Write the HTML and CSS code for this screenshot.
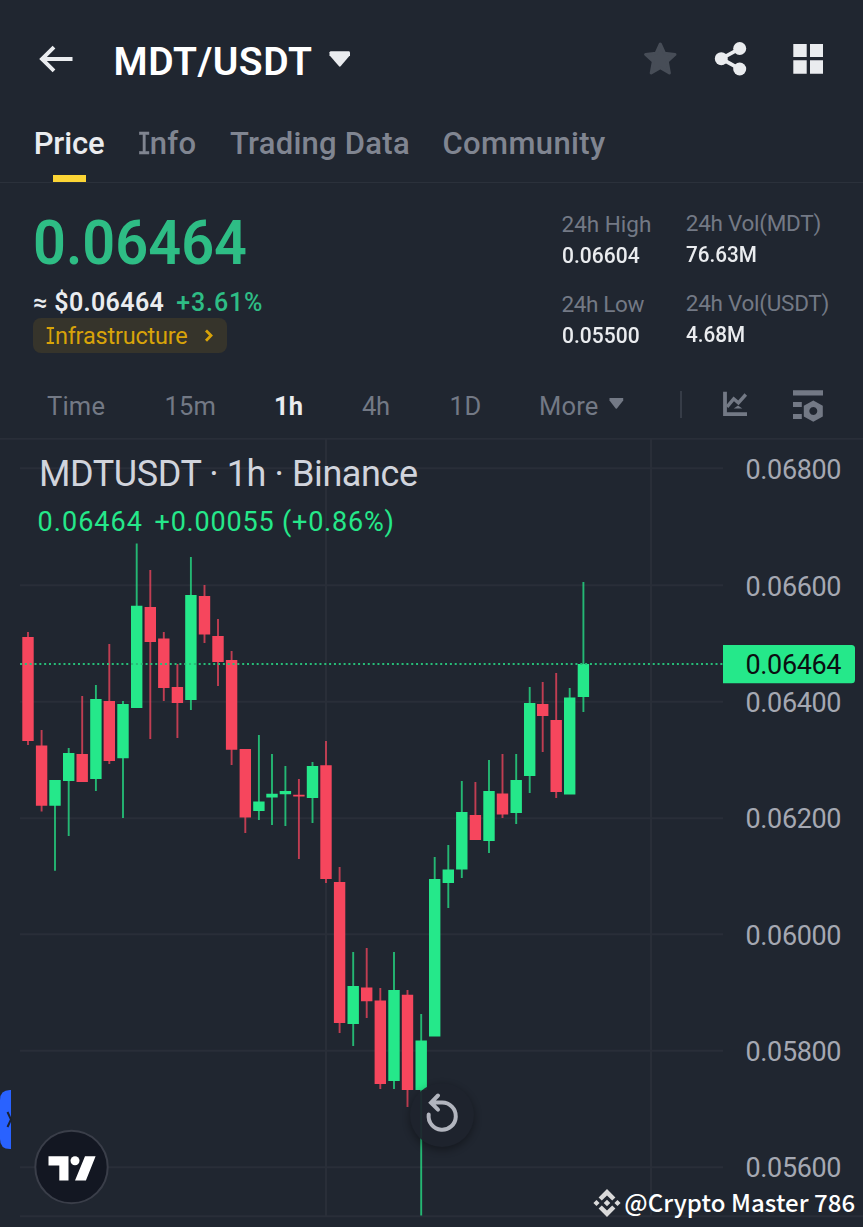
FILE: index.html
```html
<!DOCTYPE html>
<html lang="en">
<head>
<meta charset="utf-8">
<title>MDT/USDT</title>
<link rel="stylesheet" href="styles.css">
</head>
<body>
<main class="app">
  <header class="topbar">
    <svg class="back" width="36" height="30" viewBox="38 44 36 30"><path d="M54 47.2 42 59l12 11.8M42 59h30.5"/></svg>
    <h1 class="pair">MDT/USDT</h1>
    <svg class="caret" width="22" height="18" viewBox="329 50 22 18"><path d="M330.5 51.3h18.7l.8 1v3L340.6 66.3q-.8.7-1.6 0L329.500 55.300v-3z"/></svg>
    <div class="actions">
      <svg width="36" height="36" viewBox="642 41 36 36"><path class="star" d="m660.3 44 4.300 9.300 10.400 1.200-7.700 7 2.100 11.500-9.100-5.200-9.100 5.200 2.100-11.500-7.700-7 10.400-1.200z"/></svg>
      <svg width="36" height="36" viewBox="713 41 36 36"><path class="link" d="M739.700 48.700 721.300 58.700l18.400 10.200"/><circle cx="739.700" cy="48.500" r="6.500"/><circle cx="721.300" cy="58.700" r="6.500"/><circle cx="739.700" cy="69" r="6.500"/></svg>
      <svg width="36" height="36" viewBox="790 41 36 36"><path d="M793.300 44h13.400v12.900h-13.400zM810 44h13v12.900h-13zM793.300 60.300h13.400v13.400h-13.400zM810 60.300h13v13.400h-13z"/></svg>
    </div>
  </header>

  <nav class="tabs">
    <a class="tab active">Price</a>
    <a class="tab t-info"><span class="cap-i">I</span>nfo</a>
    <a class="tab t-trading">Trading Data</a>
    <a class="tab t-community">Community</a>
  </nav>

  <section class="summary">
    <div class="quote">
      <div class="last">0.06464</div>
      <div class="approx"><span class="usd">≈ $0.06464</span><span class="chg">+3.61%</span></div>
      <a class="tag"><span class="tag-text"><span class="cap-i">I</span>nfrastructure</span><svg width="10" height="14" viewBox="204 329 10 14"><path d="m206 330.500 5 5-5 5.200"/></svg></a>
    </div>
    <dl class="stats s1">
      <dt>24h High</dt><dd>0.06604</dd>
      <dt class="low">24h Low</dt><dd>0.05500</dd>
    </dl>
    <dl class="stats s2">
      <dt>24h Vol(MDT)</dt><dd>76.63M</dd>
      <dt>24h Vol(USDT)</dt><dd>4.68M</dd>
    </dl>
  </section>

  <nav class="frames">
    <a class="f1">Time</a>
    <a class="f2">15m</a>
    <a class="f3 on">1h</a>
    <a class="f4">4h</a>
    <a class="f5">1D</a>
    <a class="f6">More</a>
    <svg class="more" width="16" height="12" viewBox="608 397 16 12"><path d="M609.500 398h13.700v2.500l-6.300 7.900q-.6.600-1.200 0l-6.200-7.900z"/></svg>
    <i class="rule"></i>
    <svg class="ico-line" width="26" height="26" viewBox="722 391 26 26"><path d="M725 391.700v22.400h22" stroke-width="3.800"/><path d="m727 406.800 6.700-8 4.700 4 7.400-8.300" stroke-width="3.400"/><path d="m738 405.500 4.300 2.900h-8.600z" stroke="none" fill="#737985"/></svg>
    <svg class="ico-set" width="32" height="34" viewBox="792 388 32 34"><path fill-rule="evenodd" d="M793 389.300h30v5.200h-30zM793 401h8.800v4.900H793zM793 413h8.800v5H793zM813.300 399.500l9.500 5.300v10.600l-9.500 5.300-9.500-5.300v-10.600zM813.300 406a4 4 0 1 0 .01 0z"/></svg>
  </nav>

  <section class="chart">
    <svg width="863" height="789" viewBox="0 438 863 789">
      <g class="grid">
        <path d="M0 438.700H863M20 1216.200H863"/>
        <path d="M20 468.300H723M20 585.200H723M20 701.700H723M20 818.200H723M20 934.300H723M20 1050.800H723M20 1167.300H723M326 438V1216M651 438V1216"/>
      </g>
      <g class="down">
        <path class="wick" d="M28 632V745M41.600 730V811.500M82.200 696V782M109.300 644V764M150.300 570V739M163.800 632V701M177.400 664V738M204.500 585V643M218 619V686M231.600 651V765M245.300 749V833M298.900 779V859M326 741V883M339.600 867V1033M366.700 948V1018M380.300 988V1089M407.500 990V1107M475.400 782V840M502.500 754V818M542.700 682V752M556.200 673V798"/>
        <path class="body" d="M28 637V741M41.600 745.500V805.700M82.200 754V782M109.300 701V761M150.300 607V642M163.800 638.500V688M177.400 687V703M204.500 596V634.500M218 636V662M231.600 660V749.700M245.300 749V817.500M298.900 794.800V796.500M326 765.300V879M339.600 882V1023M366.700 987.500V1001.300M380.300 1000.500V1084M407.500 994.700V1090M475.400 815V840M502.500 793.500V814.500M542.700 704V716M556.200 720V792"/>
      </g>
      <g class="up">
        <path class="wick" d="M55 780V870.700M68.700 748V836M95.900 685V791M123 701V818M136.700 543.500V708M190.900 557V710M258.900 735V820M272 754V825M285.400 766V826M312.500 762V823M353.200 952V1046M394 952V1089M421.200 1014V1215.500M434.700 857V1036M448.300 845V908M461.800 781V878M489 760V853M516.200 754V824M529.700 687V793M569.700 688V794M583.400 582V712"/>
        <path class="body" d="M55 780V805.700M68.700 753V781M95.900 699V779M123 704V758.300M136.700 605.700V708M190.900 595V700M258.900 801.500V811M272 793.700V797.400M285.400 791V794.300M312.500 766V798M353.200 986V1024M394 990V1081M421.200 1040.500V1090M434.700 879V1036.500M448.300 869.500V883M461.800 812V869.500M489 791V841M516.200 780V813M529.700 703V776M569.700 697.500V794.500M583.400 664V697"/>
      </g>
      <path class="last-line" d="M20 664H723"/>
      <path class="last-tag" d="M723 645H851.500Q855 645 855 648.500V679.700Q855 683.200 851.500 683.200H723z"/>
      <g class="axis">
        <text x="745.500" y="479" textLength="96">0.06800</text>
        <text x="745.500" y="595.700" textLength="96">0.06600</text>
        <text x="745.500" y="711.500" textLength="96">0.06400</text>
        <text x="745.500" y="828" textLength="96">0.06200</text>
        <text x="745.500" y="944.500" textLength="96">0.06000</text>
        <text x="745.500" y="1061" textLength="96">0.05800</text>
        <text x="745.500" y="1177" textLength="96">0.05600</text>
        <text class="axis-now" x="745.500" y="673.500" textLength="96">0.06464</text>
      </g>
      <text class="c-title" x="39" y="486" textLength="379">MDTUSDT · 1h · Binance</text>
      <text class="c-price" x="37.500" y="531" textLength="104.500">0.06464</text>
      <text class="c-price" x="154.500" y="531" textLength="239.500">+0.00055 (+0.86%)</text>
      <g class="handle"><path fill="#2962ff" d="M11 1090H10Q0 1090 0 1100V1139Q0 1149 10 1149H11z"/><path d="M7.500 1112 11 1119.500 7.500 1127" fill="none" stroke="#1b2130" stroke-width="2"/></g>
      <g class="brand"><circle cx="71.500" cy="1167" r="36.200"/><path d="M48.500 1156.300h20v24.200h-9.200v-15H48.500zM85 1156.300h10.600l-9.700 24.200H75z"/><circle class="dot" cx="75" cy="1160.800" r="4.500"/></g>
      <g class="reset"><circle cx="442" cy="1115" r="32"/><path d="M428.700 1114.500A13.600 13.600 0 1 0 442 1102.600H431.500M438 1095.500 431 1102.700 438 1109.700"/></g>
      <g class="mark"><path d="m607 1189 8.400 8.400-3.200 3.200-5.200-5.200-5.200 5.200-3.200-3.200zM607 1217l-8.400-8.400 3.200-3.200 5.200 5.200 5.200-5.200 3.200 3.200zM607 1199.700l3.300 3.300-3.300 3.300-3.300-3.300zM596.500 1199.900l3.100 3.100-3.100 3.100-3.100-3.100zM617.500 1199.900l3.100 3.100-3.100 3.100-3.100-3.100z"/><text x="624.300" y="1212" textLength="231">@Crypto Master 786</text></g>
    </svg>
  </section>
</main>
</body>
</html>
```
FILE: styles.css
```css
* { box-sizing: border-box; margin: 0; padding: 0; }
body { width: 863px; height: 1227px; overflow: hidden; background: #202630; font-family: Roboto, "Liberation Sans", sans-serif; color: #eaecef; }
svg { display: block; flex: none; }
.app { display: flex; flex-direction: column; height: 1227px; }

/* Top bar */
.topbar { display: flex; align-items: center; height: 118px; padding: 0 37px 0 38px; }
.back path { fill: none; stroke: #eaecef; stroke-width: 3.9; }
.pair { margin-left: 39.5px; padding-top: 5px; font-size: 39px; line-height: 46px; font-weight: 600; letter-spacing: .5px; color: #fff; white-space: nowrap; }
.caret { margin-left: 16.5px; fill: #eaecef; }
.actions { display: flex; margin-left: auto; fill: #eaecef; }
.actions svg + svg { margin-left: 35px; }
.actions svg:last-child { margin-left: 41px; }
.star { fill: #474d57; stroke: #474d57; stroke-width: 3; stroke-linejoin: round; }
.link { fill: none; stroke: #eaecef; stroke-width: 3.8; }

/* Section tabs */
.tabs { display: flex; height: 65px; padding-left: 33.7px; border-bottom: 1px solid #2b313b; font-size: 31px; font-weight: 500; color: #808591; white-space: nowrap; }
.tab { height: 64px; line-height: 51px; }
.active { color: #eaecef; letter-spacing: -.13px; background: linear-gradient(#fcd535, #fcd535) 19px 57px / 33px 7px no-repeat; }
.t-info { margin-left: 33px; letter-spacing: .3px; }
.t-trading { margin-left: 33.5px; letter-spacing: .26px; }
.t-community { margin-left: 32.6px; letter-spacing: .37px; }
.cap-i { display: inline-block; font-family: "DejaVu Sans Mono", monospace; font-size: .96em; line-height: 1; transform: scaleX(.8); transform-origin: left; margin: 0 -.17em 0 -.03em; }
.tab .cap-i { -webkit-text-stroke: .5px currentColor; }

/* Quote summary */
.summary { display: flex; height: 190px; }
.quote { flex: none; width: 561.5px; padding: 28px 0 0 33px; }
.last { font-size: 62px; line-height: 64px; font-weight: 600; color: #2ebd85; transform: scaleX(.93); transform-origin: left; }
.approx { display: flex; height: 43px; line-height: 55px; font-size: 25px; font-weight: 600; white-space: nowrap; }
.usd { letter-spacing: .35px; }
.chg { color: #2ebd85; font-weight: 500; margin-left: 12px; letter-spacing: .9px; }
.tag { display: flex; align-items: center; justify-content: space-between; width: 194px; height: 35px; padding: 1px 13px 0; border-radius: 8px; background: #36342b; color: #d8a309; font-size: 23.5px; line-height: 35px; letter-spacing: -.2px; }
.tag path { fill: none; stroke: #d8a309; stroke-width: 2.8; }
.stats { flex: none; font-size: 22.5px; line-height: 31px; white-space: nowrap; padding-top: 25.5px; }
.stats dt { color: #737985; }
.stats dd { width: 100px; font-weight: 500; color: #eaecef; margin-bottom: 18px; transform: scaleX(.935); transform-origin: left; }
.s1 { width: 124.3px; }
.s1 .low { letter-spacing: -.37px; }
.s2 { padding-top: 25px; }
.s2 dt { letter-spacing: -.27px; }
.s2 dd { transform: scaleX(.92); }

/* Chart intervals */
.frames { display: flex; align-items: center; height: 65px; font-size: 25.5px; color: #737985; white-space: nowrap; padding-left: 47px; letter-spacing: .2px; }
.frames a { flex: none; padding-top: 1px; }
.f1 { width: 117.5px; }
.f2 { width: 109.5px; }
.f3 { width: 88px; }
.f4 { width: 87.5px; letter-spacing: -.35px; }
.f5 { width: 89.5px; letter-spacing: .6px; }
.f6 { width: 69px; }
.on { color: #eaecef; font-weight: 700; }
.more, .ico-set { fill: #737985; }
.more { margin-bottom: 5px; }
.rule { width: 2px; height: 27px; margin: 0 40px 3px 56px; background: #363c47; }
.ico-line { fill: none; stroke: #737985; margin: 0 44px 3px 0; }

/* Candlestick chart */
.chart { height: 789px; }
.grid path { stroke: #292e38; stroke-width: 2; fill: none; }
.wick { stroke-width: 1.9; fill: none; opacity: .75; }
.body { stroke-width: 11.4; fill: none; }
.down { stroke: #f6465d; }
.up { stroke: #25e88a; }
.last-line { stroke: #27bd78; stroke-width: 1.8; stroke-dasharray: 2 2.83; }
.last-tag { fill: #25e88a; }
.axis { font-size: 27px; fill: #a5a8b2; }
.axis-now { fill: #0b0e11; }
.c-title { font-size: 36px; fill: #d1d4dc; }
.c-price { font-size: 27px; fill: #25e88a; }
.brand circle { fill: #131722; stroke: #3a3e49; stroke-width: 2; }
.brand path, .brand .dot { fill: #fff; stroke: none; }
.reset circle { fill: #1e232d; filter: drop-shadow(0 3px 4px rgba(0,0,0,.4)); opacity: .93; }
.reset path { fill: none; stroke: #b2b5be; stroke-width: 4; stroke-linecap: round; }
.mark { fill: #d9d9d9; }
.mark text { font: 500 24px "Noto Sans CJK SC", sans-serif; fill: #fff; }
```
